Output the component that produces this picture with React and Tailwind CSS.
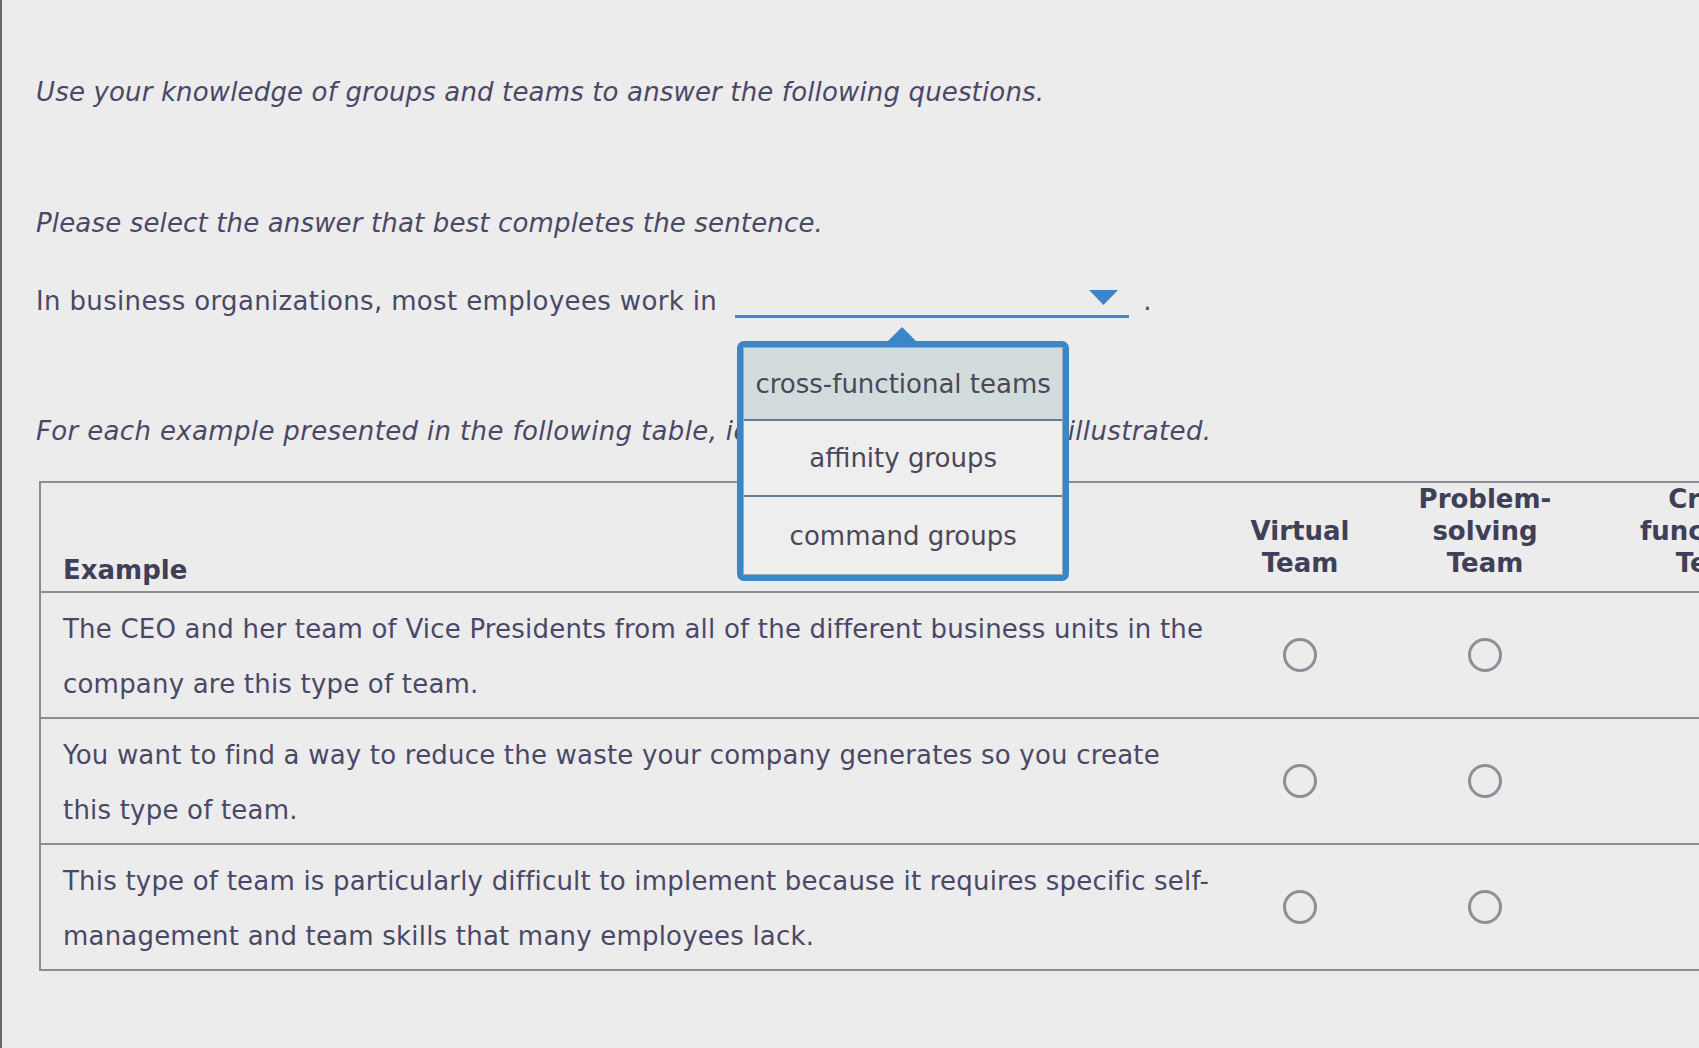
import React from "react";

const rows = [
  ["The CEO and her team of Vice Presidents from all of the different business units in the", "company are this type of team."],
  ["You want to find a way to reduce the waste your company generates so you create", "this type of team."],
  ["This type of team is particularly difficult to implement because it requires specific self-", "management and team skills that many employees lack."],
];

function Radio() {
  return <span className="inline-block w-[34px] h-[34px] rounded-full border-[3px] border-[#8e8e96] bg-transparent align-middle" />;
}

export default function App() {
  return (
    <div
      className="w-[1699px] h-[1048px] overflow-hidden bg-[#ececec] border-l-2 border-[#6a6a6a] text-[#4a4866] relative"
      style={{ fontFamily: '"DejaVu Sans", Verdana, sans-serif' }}
    >
      <div className="pl-[34px] pt-[75px]">
        <p className="italic text-[26px] leading-[34px] whitespace-nowrap tracking-[0.15px]">
          Use your knowledge of groups and teams to answer the following questions.
        </p>
        <p className="italic text-[26px] leading-[34px] mt-[97px] whitespace-nowrap tracking-[0.15px]">
          Please select the answer that best completes the sentence.
        </p>
        <div className="mt-[44px] flex items-start text-[26px] leading-[34px] whitespace-nowrap">
          <span className="tracking-[0.35px]">In business organizations, most employees work in</span>
          <span className="relative ml-[18px] w-[394px] h-[34px] border-b-[3px] border-[#3d88c8] block shrink-0">
            <svg className="absolute right-[11px] top-[6px]" width="29" height="15" viewBox="0 0 29 15">
              <polygon points="0,0 29,0 14.5,15" fill="#3a86c6" />
            </svg>
            <div className="absolute left-[2px] top-[43px] z-10">
              <svg className="absolute left-[149px] top-[0px]" width="32" height="16" viewBox="0 0 32 16">
                <polygon points="0,16 16,0 32,16" fill="#3a86c6" />
              </svg>
              <div className="mt-[14px] w-[332px] h-[240px] rounded-[7px] border-[6px] border-[#3a86c6] bg-[#eeeeee] flex flex-col overflow-hidden">
                <div className="flex-1 flex flex-col border-[1px] border-[#a0aab0]">
                  <div className="h-[73px] flex items-center justify-center bg-[#d3dcdc] border-b-2 border-[#5e7d98] text-[26px] text-[#4a4858]">
                    cross-functional teams
                  </div>
                  <div className="h-[76px] flex items-center justify-center border-b-2 border-[#5e7d98] text-[26px] text-[#4a4858]">
                    affinity groups
                  </div>
                  <div className="flex-1 flex items-center justify-center text-[26px] text-[#4a4858]">
                    command groups
                  </div>
                </div>
              </div>
            </div>
          </span>
          <span className="ml-[14px]">.</span>
        </div>
        <p className="italic text-[26px] leading-[34px] mt-[96px] whitespace-nowrap tracking-[0.35px]">
          For each example presented in the following table, identify the type of team illustrated.
        </p>
        <table className="mt-[33px] ml-[3px] border-collapse table-fixed w-[1831px]">
          <colgroup>
            <col className="w-[1171px]" />
            <col className="w-[178px]" />
            <col className="w-[192px]" />
            <col className="w-[290px]" />
          </colgroup>
          <thead>
            <tr className="border-t-2 border-l-2 border-b-2 border-[#8c8c92] h-[105px]">
              <th className="text-left align-bottom pl-[22px] pb-[4px] font-bold text-[26px] leading-[34px] text-[#403f58]">Example</th>
              <th className="text-center align-bottom pb-[12px] font-bold text-[26px] leading-[32px] text-[#403f58]">Virtual<br />Team</th>
              <th className="text-center align-bottom pb-[12px] font-bold text-[26px] leading-[32px] text-[#403f58]">Problem-<br />solving<br />Team</th>
              <th className="text-center align-bottom pb-[12px] pr-[24px] font-bold text-[26px] leading-[32px] text-[#403f58] whitespace-nowrap">Cross-<br />functional<br />Team</th>
            </tr>
          </thead>
          <tbody>
            {rows.map((r, i) => (
              <tr key={i} className="border-l-2 border-b-2 border-[#8c8c92]">
                <td className="pl-[22px] pt-[9px] pb-[5px] text-[26px] leading-[55px] align-top whitespace-nowrap tracking-[0.2px]">
                  <div>{r[0]}</div>
                  <div>{r[1]}</div>
                </td>
                <td className="text-center align-middle"><Radio /></td>
                <td className="text-center align-middle"><Radio /></td>
                <td className="text-center align-middle"><Radio /></td>
              </tr>
            ))}
          </tbody>
        </table>
      </div>
    </div>
  );
}
